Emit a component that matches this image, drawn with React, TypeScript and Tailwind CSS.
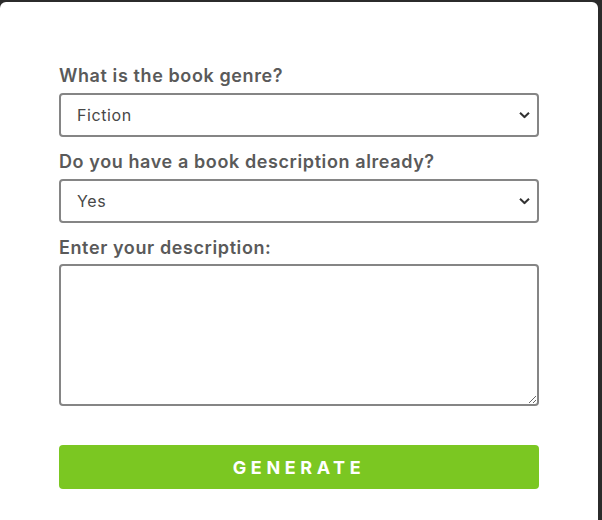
import { useState } from "react";

const Chevron = () => (
  <svg
    className="pointer-events-none absolute right-[9px] top-1/2 -translate-y-1/2"
    width="11"
    height="7"
    viewBox="0 0 11 7"
    fill="none"
  >
    <path d="M1 1.2L5.5 5.5L10 1.2" stroke="#333" strokeWidth="2" />
  </svg>
);

type SelectProps = {
  value: string;
  options: string[];
  onChange: (value: string) => void;
};

const Select = ({ value, options, onChange }: SelectProps) => (
  <div className="relative">
    <select
      className="h-[44px] w-full appearance-none rounded-[4px] border-2 border-[#858585] bg-white pl-[16px] text-[16px] tracking-[0.6px] text-[#474747] outline-none"
      value={value}
      onChange={(e) => onChange(e.target.value)}
    >
      {options.map((o) => (
        <option key={o}>{o}</option>
      ))}
    </select>
    <Chevron />
  </div>
);

const App = () => {
  const [genre, setGenre] = useState("Fiction");
  const [hasDescription, setHasDescription] = useState("Yes");
  const [description, setDescription] = useState("");

  return (
    <div className="min-h-screen bg-[#2b2b2b] pt-[2px] pr-[4px]">
      <div className="min-h-[540px] rounded-[6px] bg-white px-[59px] pt-[62px] font-['Inter',sans-serif]">
        <form
          className="flex w-[480px] flex-col"
          onSubmit={(e) => e.preventDefault()}
        >
          <label className="mb-[5px] h-6 text-[18px] font-semibold leading-6 tracking-[0.6px] text-[#5a5a5a]">
            What is the book genre?
          </label>
          <Select
            value={genre}
            options={["Fiction", "Non-fiction", "Poetry"]}
            onChange={setGenre}
          />

          <label className="mt-[13px] mb-[5px] h-6 text-[18px] font-semibold leading-6 tracking-[0.6px] text-[#5a5a5a]">
            Do you have a book description already?
          </label>
          <Select
            value={hasDescription}
            options={["Yes", "No"]}
            onChange={setHasDescription}
          />

          <label className="mt-[13px] mb-[4px] h-6 text-[18px] font-semibold leading-6 tracking-[0.6px] text-[#5a5a5a]">
            Enter your description:
          </label>
          <textarea
            className="h-[142px] w-full rounded-[4px] border-2 border-[#858585] px-4 py-2 text-[16px] text-[#474747] outline-none"
            value={description}
            onChange={(e) => setDescription(e.target.value)}
          />

          <button
            type="submit"
            className="mt-[39px] h-[44px] w-full rounded-[4px] bg-[#7bc722] text-[18px] font-bold uppercase tracking-[4.6px] text-white"
          >
            Generate
          </button>
        </form>
      </div>
    </div>
  );
};

export default App;
